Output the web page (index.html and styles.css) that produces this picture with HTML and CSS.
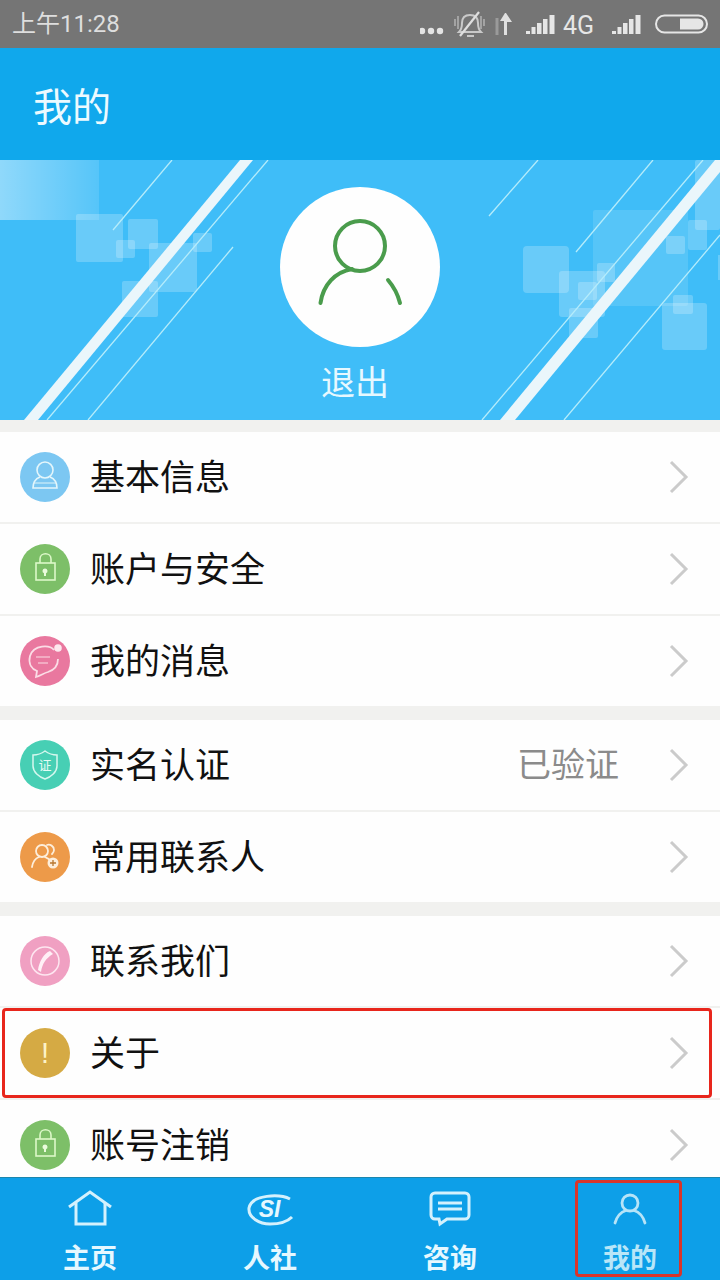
FILE: index.html
```html
<!DOCTYPE html>
<html lang="zh-CN">
<head>
<meta charset="utf-8">
<title>我的</title>
<link rel="stylesheet" href="styles.css">
</head>
<body>
<div class="page">
  <div class="status">
    <span class="time">上午11:28</span>
    <svg class="status-icons" width="300" height="48" viewBox="0 0 300 48">
      <g fill="#e4e4e4">
        <circle cx="2" cy="31" r="3.200"/><circle cx="11" cy="31" r="3.200"/><circle cx="20" cy="31" r="3.200"/>
      </g>
      <g fill="none" stroke="#c9c9c9" stroke-width="2">
        <path d="M43 32h-4c2-2 3-4 3-9 0-5 3-8 8-8s8 3 8 8c0 5 1 7 3 9z"/>
        <path d="M47 36h7"/>
        <path d="M38 16v13M35 19v7M61 16v13M64 19v7" stroke-width="1.600" stroke="#b0b0b0"/>
        <path d="M40 36L59 12" stroke="#dedede" stroke-width="2.200"/>
      </g>
      <path d="M77 18v17" stroke="#9a9a9a" stroke-width="3"/>
      <path d="M80 21l5-8 1 0 6 9h-5v13h-3v-14z" fill="#e0e0e0"/>
      <g fill="#e6e6e6">
        <rect x="106" y="31" width="4" height="3"/><rect x="111.500" y="27" width="4" height="7"/><rect x="117" y="23" width="4.500" height="11"/><rect x="123" y="19" width="4.500" height="15"/><rect x="129.500" y="15" width="5" height="19"/>
      </g>
      <text class="status-4g" x="143" y="34">4G</text>
      <g fill="#e6e6e6">
        <rect x="192" y="31" width="4" height="3"/><rect x="197.500" y="27" width="4" height="7"/><rect x="203" y="23" width="4.500" height="11"/><rect x="209" y="19" width="4.500" height="15"/><rect x="215.500" y="15" width="5" height="19"/>
      </g>
      <rect x="236" y="15.500" width="51" height="17" rx="8.500" fill="none" stroke="#e6e6e6" stroke-width="2"/>
      <path d="M260 18.500h18a5.500 5.500 0 0 1 0 11h-18z" fill="#e6e6e6"/>
    </svg>
  </div>

  <header class="appbar">我的</header>

  <section class="banner">
    <svg class="banner-art" width="720" height="260" viewBox="0 160 720 260">
      <defs>
        <linearGradient id="corner" x1="0" y1="0" x2="1" y2="0">
          <stop offset="0" stop-color="#ffffff" stop-opacity=".42"/>
          <stop offset="1" stop-color="#ffffff" stop-opacity=".12"/>
        </linearGradient>
      </defs>
      <rect x="0" y="160" width="99" height="60" fill="url(#corner)"/>
      <g fill="#ffffff" fill-opacity=".22">
        <rect x="76" y="214" width="47" height="48" rx="2"/>
        <rect x="128" y="219" width="30" height="30" rx="2"/>
        <rect x="116" y="240" width="19" height="18" rx="2"/>
        <rect x="149" y="243" width="48" height="49" rx="2"/>
        <rect x="193" y="233" width="19" height="19" rx="2"/>
        <rect x="122" y="281" width="36" height="36" rx="2"/>
        <rect x="523" y="246" width="46" height="47" rx="4"/>
        <rect x="559" y="271" width="46" height="46" rx="3"/>
        <rect x="593" y="210" width="95" height="96" rx="2" fill-opacity=".12"/>
        <rect x="578" y="282" width="19" height="18" rx="2"/>
        <rect x="569" y="308" width="29" height="30" rx="2"/>
        <rect x="597" y="263" width="18" height="19" rx="2"/>
        <rect x="666" y="236" width="19" height="18" rx="2"/>
        <rect x="688" y="220" width="19" height="30" rx="2"/>
        <rect x="695" y="160" width="25" height="70" rx="2"/>
        <rect x="662" y="303" width="45" height="47" rx="3"/>
        <rect x="673" y="295" width="20" height="19" rx="2"/>
        <rect x="718" y="255" width="2" height="25"/>
      </g>
      <g fill="#eaf6fb">
        <polygon points="24,420 38,420 253,160 240,160"/>
        <polygon points="500,420 515,420 730,160 715,160"/>
      </g>
      <g stroke="#b5ecfb" stroke-width="1.300" fill="none">
        <path d="M172 160L113 230"/>
        <path d="M268 160L47 420"/>
        <path d="M233 247L88 420"/>
        <path d="M538 160L489 216"/>
        <path d="M653 160L576 252"/>
        <path d="M703 160L482 420"/>
        <path d="M720 235L564 420"/>
      </g>
    </svg>
    <div class="avatar">
      <svg width="160" height="160" viewBox="280 187 160 160" fill="none" stroke="#4a9c4c" stroke-width="4" stroke-linecap="round">
        <circle cx="360" cy="246" r="25"/>
        <path d="M320.500 303C323 285 335 272 352 269"/>
        <path d="M388 280C394 287 398 295 400 303"/>
      </svg>
    </div>
    <div class="logout">退出</div>
  </section>

  <main class="list">
    <div class="group">
      <div class="row">
        <svg class="badge" width="50" height="50" viewBox="0 0 50 50"><circle cx="25" cy="25" r="25" fill="#7cc7f2"/><g fill="none" stroke="#e4f6fb" stroke-width="1.600"><circle cx="25" cy="18" r="8"/><path d="M20 25C15 27 13 31 13 36H37C37 31 35 27 30 25"/><path d="M14 31H36" stroke-opacity=".6"/></g></svg>
        <span class="label">基本信息</span>
        <svg class="chev" width="20" height="34" viewBox="0 0 20 34"><path d="M2 2L17 17L2 32"/></svg>
      </div>
      <div class="row">
        <svg class="badge" width="50" height="50" viewBox="0 0 50 50"><circle cx="25" cy="25" r="25" fill="#7dbf68"/><g fill="none" stroke="#dcf8c8" stroke-width="1.600"><rect x="16" y="19" width="19" height="17"/><path d="M20 19V15C20 8 31 8 31 15V19"/></g><path d="M25 24.500a2.500 2.500 0 0 1 1 4.800V32h-2v-2.700a2.500 2.500 0 0 1 1-4.800z" fill="#eafbdc"/></svg>
        <span class="label">账户与安全</span>
        <svg class="chev" width="20" height="34" viewBox="0 0 20 34"><path d="M2 2L17 17L2 32"/></svg>
      </div>
      <div class="row">
        <svg class="badge" width="50" height="50" viewBox="0 0 50 50"><circle cx="25" cy="25" r="25" fill="#e9789f"/><path d="M34 14C30 9 14 8 10 20C8 28 12 33 17 35L16 41C20 40 24 37 28 36C34 34 38 30 38 23" fill="none" stroke="#fbdde6" stroke-width="1.800"/><circle cx="38" cy="12" r="3.800" fill="#fde8ee"/><path d="M16 21H30M18 27H28" stroke="#fbdde6" stroke-width="1.200"/></svg>
        <span class="label">我的消息</span>
        <svg class="chev" width="20" height="34" viewBox="0 0 20 34"><path d="M2 2L17 17L2 32"/></svg>
      </div>
    </div>

    <div class="group">
      <div class="row">
        <svg class="badge" width="50" height="50" viewBox="0 0 50 50"><circle cx="25" cy="25" r="25" fill="#47cfb4"/><path d="M25 11C21 14 17 15 13 15V26C13 32 19 37 25 39C31 37 37 32 37 26V15C33 15 29 14 25 11z" fill="none" stroke="#d6f7ee" stroke-width="1.500"/><text class="badge-text" x="25" y="30">证</text></svg>
        <span class="label">实名认证</span>
        <span class="value">已验证</span>
        <svg class="chev" width="20" height="34" viewBox="0 0 20 34"><path d="M2 2L17 17L2 32"/></svg>
      </div>
      <div class="row">
        <svg class="badge" width="50" height="50" viewBox="0 0 50 50"><circle cx="25" cy="25" r="25" fill="#ed9a49"/><g fill="none" stroke="#fdeedb" stroke-width="1.800" stroke-linecap="round"><circle cx="22" cy="19" r="6"/><path d="M12 35C13 29 16 26 19 25M25 25C27 26 29 27 30 28"/><path d="M27 13C30 12 34 14 34 18C34 20 33 21 32 22"/></g><circle cx="33" cy="31" r="5.500" fill="#fdeedb"/><path d="M30 31H36M33 28V34" stroke="#b9772f" stroke-width="1.300"/></svg>
        <span class="label">常用联系人</span>
        <svg class="chev" width="20" height="34" viewBox="0 0 20 34"><path d="M2 2L17 17L2 32"/></svg>
      </div>
    </div>

    <div class="group">
      <div class="row">
        <svg class="badge" width="50" height="50" viewBox="0 0 50 50"><circle cx="25" cy="25" r="25" fill="#f0a0c2"/><circle cx="25" cy="25" r="14" fill="none" stroke="#fde6f0" stroke-width="1.500"/><path d="M30 15C24 17 19 26 18 34L21 36C22 28 26 22 33 18z" fill="#fff0f6"/></svg>
        <span class="label">联系我们</span>
        <svg class="chev" width="20" height="34" viewBox="0 0 20 34"><path d="M2 2L17 17L2 32"/></svg>
      </div>
      <div class="row">
        <svg class="badge" width="50" height="50" viewBox="0 0 50 50"><circle cx="25" cy="25" r="25" fill="#d5aa44"/><text class="badge-mark" x="25" y="35">!</text></svg>
        <span class="label">关于</span>
        <svg class="chev" width="20" height="34" viewBox="0 0 20 34"><path d="M2 2L17 17L2 32"/></svg>
        <div class="mark mark-row"></div>
      </div>
      <div class="row">
        <svg class="badge" width="50" height="50" viewBox="0 0 50 50"><circle cx="25" cy="25" r="25" fill="#7dbf68"/><g fill="none" stroke="#dcf8c8" stroke-width="1.600"><rect x="16" y="19" width="19" height="17"/><path d="M20 19V15C20 8 31 8 31 15V19"/></g><path d="M25 24.500a2.500 2.500 0 0 1 1 4.800V32h-2v-2.700a2.500 2.500 0 0 1 1-4.800z" fill="#eafbdc"/></svg>
        <span class="label">账号注销</span>
        <svg class="chev" width="20" height="34" viewBox="0 0 20 34"><path d="M2 2L17 17L2 32"/></svg>
      </div>
    </div>
  </main>

  <nav class="tabs">
    <div class="tab">
      <svg class="tab-icon" width="60" height="44" viewBox="0 0 60 44" fill="none" stroke="#d4f1fd" stroke-width="3"><path d="M9 19L30 4L51 19"/><path d="M16 15V36H45V15"/></svg>
      <span class="tab-label">主页</span>
    </div>
    <div class="tab">
      <svg class="tab-icon" width="60" height="44" viewBox="0 0 60 44" fill="none" stroke="#d4f1fd" stroke-width="3"><path d="M50 11C40 6 12 6 9 20C8 30 20 36 30 36C40 36 48 33 52 29"/><text class="si" x="29.500" y="29">SI</text></svg>
      <span class="tab-label">人社</span>
    </div>
    <div class="tab">
      <svg class="tab-icon" width="60" height="44" viewBox="0 0 60 44" fill="none" stroke="#d4f1fd" stroke-width="3"><path d="M15 5H45A4 4 0 0 1 49 9V27A4 4 0 0 1 45 31H27L20 36L19 31H15A4 4 0 0 1 11 27V9A4 4 0 0 1 15 5z"/><path d="M18 15H42M18 21H42"/></svg>
      <span class="tab-label">咨询</span>
    </div>
    <div class="tab tab-active">
      <svg class="tab-icon" width="60" height="44" viewBox="0 0 60 44" fill="none" stroke="#b6e4f8" stroke-width="2.800" stroke-linecap="round"><circle cx="30" cy="15" r="8"/><path d="M15 35C17 28 21 24 26 22.500M45 35C43 28 39 24 34 22.500"/></svg>
      <span class="tab-label">我的</span>
      <div class="mark mark-tab"></div>
    </div>
  </nav>
</div>
</body>
</html>
```

FILE: styles.css
```css
* { box-sizing: border-box; }

html, body {
  margin: 0;
  padding: 0;
  background: #f1f1ef;
}

body {
  font-family: "Noto Sans CJK SC", "Noto Sans", sans-serif;
  overflow: hidden;
}

.page {
  width: 720px;
  height: 1280px;
  display: flex;
  flex-direction: column;
  overflow: hidden;
}

.status {
  flex: none;
  height: 48px;
  background: #757575;
  display: flex;
  align-items: center;
  justify-content: space-between;
  padding-left: 12px;
}

.time {
  font-family: Roboto, "Noto Sans CJK SC", sans-serif;
  font-size: 24px;
  line-height: 48px;
  color: #dedede;
}

.status-icons {
  display: block;
  flex: none;
}

.status-4g {
  font-family: Roboto, sans-serif;
  font-size: 25px;
  fill: #e6e6e6;
}

.appbar {
  flex: none;
  height: 112px;
  background: #10a8ec;
  color: #ecfaff;
  font-size: 39px;
  line-height: 112px;
  padding-left: 33px;
}

.banner {
  flex: none;
  position: relative;
  height: 260px;
  background: #3fbdf8;
  display: flex;
  flex-direction: column;
  align-items: center;
  padding-top: 27px;
}

.banner-art {
  position: absolute;
  left: 0;
  top: 0;
}

.avatar {
  position: relative;
  width: 160px;
  height: 160px;
  border-radius: 50%;
  background: #fefefe;
}

.avatar svg {
  display: block;
}

.logout {
  position: relative;
  margin-top: 10px;
  margin-right: 10px;
  font-size: 34px;
  line-height: 48px;
  color: #e6f8ff;
}

.list {
  flex: 1;
  min-height: 0;
  overflow: hidden;
  padding-top: 12px;
  display: flex;
  flex-direction: column;
  gap: 14px;
}

.group {
  flex: none;
  display: flex;
  flex-direction: column;
  gap: 2px;
}

.row {
  position: relative;
  height: 90px;
  background: #fefefe;
  display: flex;
  align-items: center;
  padding: 0 31px 0 20px;
}

.badge {
  display: block;
  flex: none;
  margin-right: 20px;
}

.badge-text {
  font-size: 13px;
  fill: #e6fbf5;
  text-anchor: middle;
}

.badge-mark {
  font-family: "Liberation Sans", sans-serif;
  font-size: 29px;
  fill: #fdf3c8;
  text-anchor: middle;
}

.label {
  flex: 1;
  font-size: 35px;
  line-height: 48px;
  margin-bottom: 4px;
  color: #111111;
}

.value {
  font-size: 34px;
  line-height: 48px;
  margin-bottom: 4px;
  color: #8b8b8b;
  margin-right: 50px;
}

.chev {
  display: block;
  flex: none;
  fill: none;
  stroke: #cbcbcb;
  stroke-width: 3;
}

.mark {
  position: absolute;
  border: 3px solid #e8261c;
  border-radius: 4px;
  pointer-events: none;
}

.mark-row {
  left: 2px;
  right: 8px;
  top: 0;
  bottom: 0;
}

.mark-tab {
  left: 35px;
  width: 107px;
  top: 2px;
  bottom: 3px;
  border-color: #d8342a;
}

.tabs {
  flex: none;
  height: 103px;
  background: #0d9fe8;
  border-top: 1px solid #1b86ad;
  display: grid;
  grid-template-columns: repeat(4, 1fr);
}

.tab {
  position: relative;
  display: flex;
  flex-direction: column;
  align-items: center;
  padding-top: 10px;
}

.tab-icon {
  display: block;
  flex: none;
}

.tab-label {
  font-size: 27px;
  line-height: 38px;
  margin-top: 6px;
  font-weight: 700;
  color: #e6f8ff;
}

.tab-active .tab-label {
  color: #b8e6f8;
}

.si {
  font-family: "Liberation Sans", sans-serif;
  font-size: 23px;
  font-weight: 700;
  font-style: italic;
  fill: #e6f8ff;
  stroke: none;
  text-anchor: middle;
}
```
